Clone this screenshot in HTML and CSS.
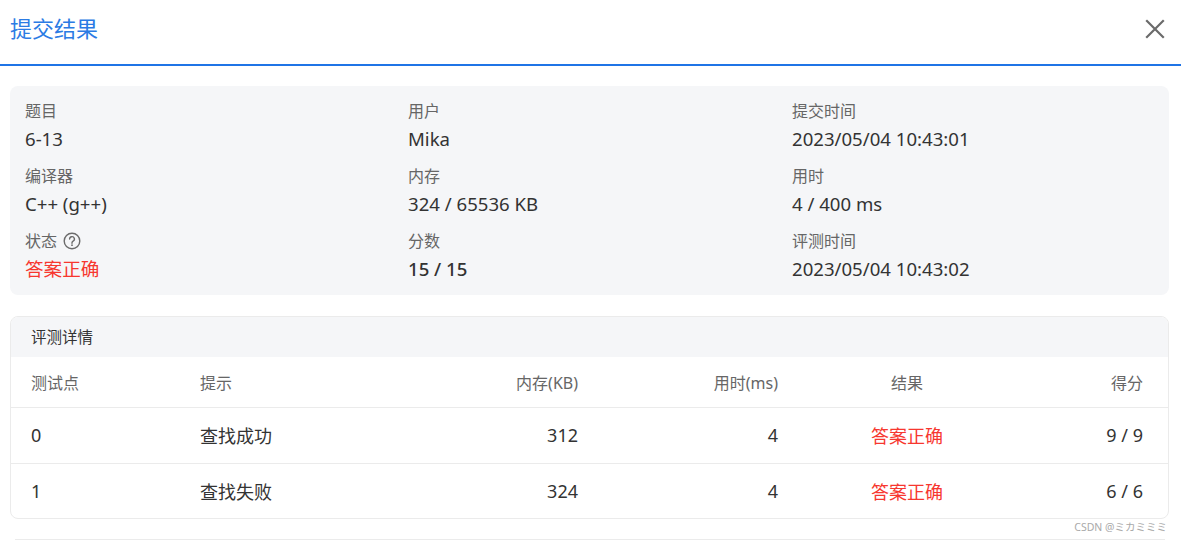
FILE: index.html
```html
<!DOCTYPE html>
<html lang="zh">
<head>
<meta charset="utf-8">
<title>提交结果</title>
<link rel="stylesheet" href="styles.css">
</head>
<body>
<div class="dialog">
  <header class="head">
    <h1 class="title">提交结果</h1>
    <button class="close" aria-label="关闭">
      <svg width="20" height="20" viewBox="0 0 20 20"><path d="M2 2L18 18M18 2L2 18" stroke="#6b6b6b" stroke-width="2.2" stroke-linecap="square" fill="none"/></svg>
    </button>
  </header>
  <div class="body">
    <section class="info">
      <div class="item"><div class="label">题目</div><div class="value">6-13</div></div>
      <div class="item"><div class="label">用户</div><div class="value">Mika</div></div>
      <div class="item"><div class="label">提交时间</div><div class="value">2023/05/04 10:43:01</div></div>
      <div class="item"><div class="label">编译器</div><div class="value">C++ (g++)</div></div>
      <div class="item"><div class="label">内存</div><div class="value">324 / 65536 KB</div></div>
      <div class="item"><div class="label">用时</div><div class="value">4 / 400 ms</div></div>
      <div class="item"><div class="label">状态 <svg class="help" width="18" height="18" viewBox="0 0 18 18"><circle cx="9" cy="9" r="7.8" fill="none" stroke="#6b6b6b" stroke-width="1.4"/><path d="M6.6 7.1a2.4 2.4 0 1 1 3.5 2.1c-.7.4-1.1.8-1.1 1.6v.5" fill="none" stroke="#6b6b6b" stroke-width="1.4" stroke-linecap="round"/><circle cx="9" cy="13.2" r=".9" fill="#6b6b6b"/></svg></div><div class="value red">答案正确</div></div>
      <div class="item"><div class="label">分数</div><div class="value bold">15 / 15</div></div>
      <div class="item"><div class="label">评测时间</div><div class="value">2023/05/04 10:43:02</div></div>
    </section>
    <section class="detail">
      <div class="detail-head">评测详情</div>
      <table class="cases">
        <thead>
          <tr><th class="c1">测试点</th><th class="c2">提示</th><th class="c3 r">内存(KB)</th><th class="c4 r">用时(ms)</th><th class="c5 c">结果</th><th class="c6 r">得分</th></tr>
        </thead>
        <tbody>
          <tr><td>0</td><td>查找成功</td><td class="r">312</td><td class="r">4</td><td class="c red">答案正确</td><td class="r">9 / 9</td></tr>
          <tr><td>1</td><td>查找失败</td><td class="r">324</td><td class="r">4</td><td class="c red">答案正确</td><td class="r">6 / 6</td></tr>
        </tbody>
      </table>
    </section>
    <div class="mark">CSDN @ミカミミミ</div>
    <div class="bottom-line"></div>
  </div>
</div>
</body>
</html>
```

FILE: styles.css
```css
* { box-sizing: border-box; }
html, body { margin: 0; padding: 0; background: #fff; }
body {
  font-family: "Noto Sans", "Noto Sans CJK SC", sans-serif;
  color: #333;
  width: 1181px;
  height: 542px;
  overflow: hidden;
}
.head {
  height: 66px;
  border-bottom: 2px solid #1f74e6;
  display: flex;
  align-items: center;
  justify-content: space-between;
  padding: 0 16px 0 10px;
}
.title {
  margin: 0;
  font-size: 22px;
  font-weight: 400;
  color: #2b7be4;
  line-height: 1;
  padding-bottom: 8px;
}
.close {
  border: 0;
  background: none;
  padding: 0;
  width: 20px;
  height: 20px;
  margin-bottom: 6px;
}
.close svg { display: block; }
.body { padding: 20px 12px 0 10px; }
.info {
  background: #f5f6f8;
  border-radius: 8px;
  height: 209px;
  display: grid;
  grid-template-columns: 383px 384px 1fr;
  grid-auto-rows: 65px;
  padding: 15px 15px 0 15px;
}
.item { display: flex; flex-direction: column; }
.label {
  font-size: 16px;
  color: #666;
  line-height: 20px;
  display: flex;
  align-items: center;
  gap: 6px;
}
.help { display: block; width: 18px; height: 18px; }
.value {
  font-size: 18.6px;
  line-height: 24px;
  margin-top: 6px;
  color: #333;
}
.value.bold { font-weight: 500; }
.red { color: #f7372f !important; }
.detail {
  margin-top: 21px;
  border: 1px solid #ebebeb;
  border-radius: 8px;
  overflow: hidden;
  height: 203px;
}
.detail-head {
  background: #f5f6f8;
  height: 40px;
  line-height: 40px;
  padding-left: 20px;
  font-size: 15.5px;
  color: #333;
}
.cases {
  width: 100%;
  border-collapse: collapse;
  table-layout: fixed;
}
.cases th {
  font-weight: 400;
  font-size: 16px;
  color: #666;
  height: 50px;
  text-align: left;
  border-bottom: 1px solid #ebebeb;
  padding: 0;
}
.cases td {
  font-size: 18px;
  color: #333;
  height: 56px;
  padding: 0;
  border-bottom: 1px solid #ebebeb;
}
.cases tbody tr:last-child td { border-bottom: 0; }
.cases th:first-child, .cases td:first-child { padding-left: 20px; }
.c1 { width: 189px; }
.c2 { width: 200px; }
.c3 { width: 178px; }
.c4 { width: 200px; }
.c5 { width: 258px; }
.c6 { width: auto; }
.cases .r { text-align: right; }
.cases .c { text-align: center; }
.cases th.c6, .cases td:last-child { padding-right: 25px; }
.mark {
  text-align: right;
  font-size: 10.5px;
  color: #a9a9a9;
  line-height: 14px;
  margin-top: 1px;
  padding-right: 2px;
}
.bottom-line {
  margin: 5px 4px 0 5px;
  border-top: 1px solid #ebebeb;
}
```
